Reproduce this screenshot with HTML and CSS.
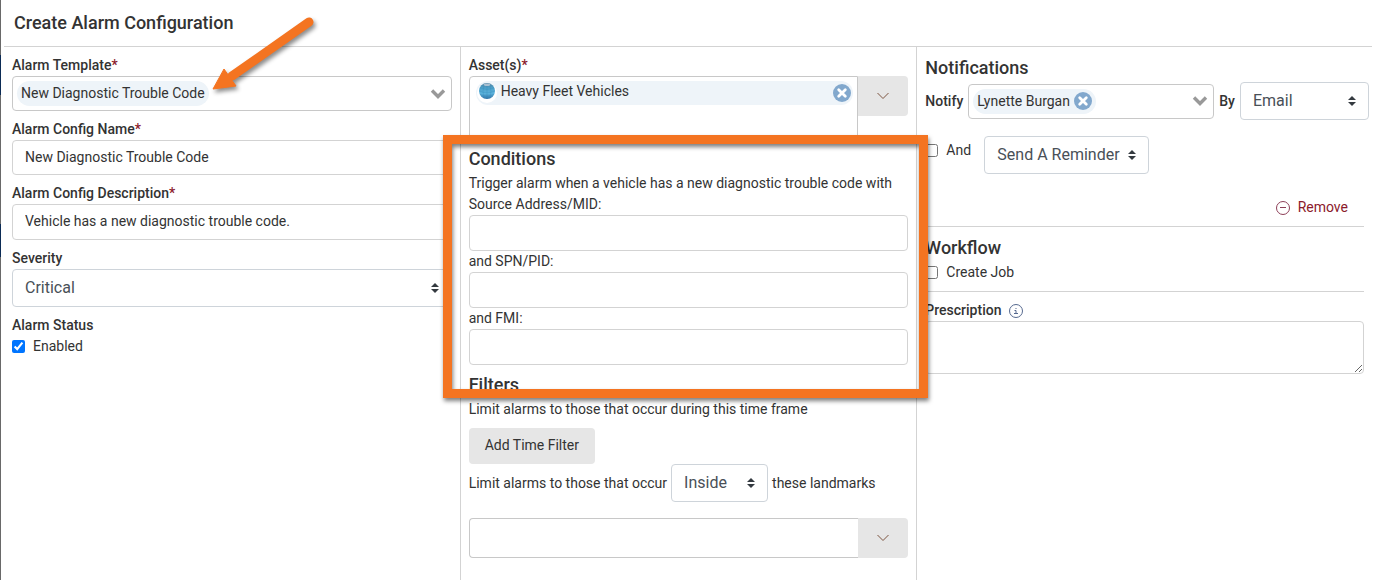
FILE: index.html
```html
<!DOCTYPE html>
<html lang="en">
<head>
<meta charset="utf-8">
<title>Create Alarm Configuration</title>
<meta name="viewport" content="width=device-width, initial-scale=1">
<link rel="stylesheet" href="styles.css">
</head>
<body>
<header class="page-header"><h1 class="page-title">Create Alarm Configuration</h1></header>
<form class="columns">
  <section class="column">
    <div class="field">
      <label class="label" for="template">Alarm Template<span class="required">*</span></label>
      <div class="picker callout-anchor">
        <span class="chip">New Diagnostic Trouble Code</span>
        <input class="picker-input" id="template" type="text">
        <button class="picker-toggle" type="button" aria-label="Show templates">
          <svg width="16" height="12" viewBox="0 0 16 12"><path d="M2 2.500 8 8.500 14 2.500" fill="none" stroke="#999" stroke-width="3.400"/></svg>
        </button>
        <svg class="arrow" width="112" height="84" viewBox="0 0 112 84" aria-hidden="true">
          <path d="M101 9 24 63" fill="none" stroke="#f47421" stroke-width="9" stroke-linecap="round"/>
          <path d="M5 76 16 56 28 73Z" fill="#f47421" stroke="#f47421" stroke-width="1"/>
        </svg>
      </div>
    </div>
    <div class="field">
      <label class="label" for="name">Alarm Config Name<span class="required">*</span></label>
      <input class="text-box name-box" id="name" type="text" value="New Diagnostic Trouble Code">
    </div>
    <div class="field">
      <label class="label" for="description">Alarm Config Description<span class="required">*</span></label>
      <input class="text-box" id="description" type="text" value="Vehicle has a new diagnostic trouble code.">
    </div>
    <div class="field">
      <label class="label" for="severity">Severity</label>
      <select class="select select-wide" id="severity"><option>Critical</option></select>
    </div>
    <div class="field">
      <span class="label">Alarm Status</span>
      <label class="check"><input class="checkbox" type="checkbox" checked>Enabled</label>
    </div>
  </section>

  <section class="column">
    <div class="field">
      <label class="label" for="assets">Asset(s)<span class="required">*</span></label>
      <div class="combo">
        <div class="asset-box">
          <div class="asset-chip">
            <span class="asset-icon">
              <svg width="16" height="16" viewBox="0 0 16 16" aria-hidden="true">
                <defs><linearGradient id="globe" x1="0" y1="0" x2="0" y2="1"><stop offset="0" stop-color="#4a7f9f"/><stop offset=".3" stop-color="#4c9fc8"/><stop offset=".65" stop-color="#5bb2dc"/><stop offset="1" stop-color="#3273a6"/></linearGradient></defs>
                <circle cx="8" cy="8" r="8" fill="url(#globe)"/>
                <ellipse cx="8" cy="1.800" rx="3.400" ry="1.300" fill="#a9bfd0"/>
                <path d="M1 5Q8 8 15 5M.3 8Q8 11.500 15.700 8M1 11.500Q8 15 15 11.500M5 2Q3 8 5 15M8 3v13M11 2Q13 8 11 15" fill="none" stroke="#2b83b4" stroke-width=".5" opacity=".5"/>
              </svg>
            </span>
            <span class="asset-name">Heavy Fleet Vehicles</span>
            <button class="clear" type="button" aria-label="Remove Heavy Fleet Vehicles">
              <svg width="18" height="18" viewBox="0 0 18 18"><circle cx="9" cy="9" r="9" fill="#82a8cd"/><path d="m5.700 5.700 6.600 6.600m0-6.600-6.600 6.600" stroke="#fff" stroke-width="2.800" stroke-linecap="round"/></svg>
            </button>
          </div>
          <input class="asset-input" id="assets" type="text">
        </div>
        <button class="combo-toggle" type="button" aria-label="Choose assets"><svg width="12" height="8" viewBox="0 0 12 8"><path d="m.5 1 5.500 5.500L11.500 1" fill="none" stroke="#7d5540"/></svg></button>
      </div>
    </div>

    <div class="conditions">
      <h2 class="heading">Conditions</h2>
      <p class="copy">Trigger alarm when a vehicle has a new diagnostic trouble code with</p>
      <label class="copy" for="source">Source Address/MID:</label>
      <input class="text-box" id="source" type="text">
      <label class="copy" for="spn">and SPN/PID:</label>
      <input class="text-box" id="spn" type="text">
      <label class="copy" for="fmi">and FMI:</label>
      <input class="text-box" id="fmi" type="text">
      <div class="highlight" aria-hidden="true"></div>
    </div>

    <div class="filters">
      <h2 class="heading">Filters</h2>
      <p class="copy">Limit alarms to those that occur during this time frame</p>
      <button class="button" type="button">Add Time Filter</button>
      <div class="landmark-row">
        <label for="where">Limit alarms to those that occur</label>
        <select class="select select-where" id="where"><option>Inside</option></select>
        <span>these landmarks</span>
      </div>
      <div class="combo">
        <input class="combo-input" type="text" aria-label="Landmarks">
        <button class="combo-toggle" type="button" aria-label="Choose landmarks"><svg width="12" height="8" viewBox="0 0 12 8"><path d="m.5 1 5.500 5.500L11.500 1" fill="none" stroke="#7d5540"/></svg></button>
      </div>
    </div>
  </section>

  <section class="column column-last">
    <div class="block">
      <h2 class="heading">Notifications</h2>
      <div class="notify-row">
        <label class="label" for="notify">Notify</label>
        <div class="picker picker-grow">
          <span class="chip">Lynette Burgan
            <button class="clear" type="button" aria-label="Remove Lynette Burgan">
              <svg width="18" height="18" viewBox="0 0 18 18"><circle cx="9" cy="9" r="9" fill="#82a8cd"/><path d="m5.700 5.700 6.600 6.600m0-6.600-6.600 6.600" stroke="#fff" stroke-width="2.800" stroke-linecap="round"/></svg>
            </button>
          </span>
          <input class="picker-input" id="notify" type="text">
          <button class="picker-toggle" type="button" aria-label="Show people">
            <svg width="16" height="12" viewBox="0 0 16 12"><path d="M2 2.500 8 8.500 14 2.500" fill="none" stroke="#999" stroke-width="3.400"/></svg>
          </button>
        </div>
        <label class="label" for="by">By</label>
        <select class="select select-by" id="by"><option>Email</option></select>
      </div>
      <div class="reminder-row">
        <label class="check reminder-check"><input class="checkbox" type="checkbox">And</label>
        <select class="select select-reminder" aria-label="Follow-up action"><option>Send A Reminder</option></select>
      </div>
      <div class="remove-row">
        <button class="remove" type="button">
          <svg width="14" height="14" viewBox="0 0 14 14"><circle cx="7" cy="7" r="6.500" fill="none" stroke="#8d3f58"/><path d="M4 6.500h6" stroke="#8d3f58"/></svg>
          Remove
        </button>
      </div>
    </div>
    <div class="block">
      <h2 class="heading">Workflow</h2>
      <label class="check"><input class="checkbox" type="checkbox">Create Job</label>
    </div>
    <div class="prescription">
      <div class="prescription-label">
        <label class="label" for="prescription">Prescription</label>
        <svg width="14" height="14" viewBox="0 0 14 14" aria-hidden="true"><circle cx="7" cy="7" r="6.500" fill="none" stroke="#56698f"/><path d="M5.500 6.500H7v3M5 9.500h4M6.500 4.500h1" fill="none" stroke="#56698f"/></svg>
      </div>
      <textarea class="textarea" id="prescription"></textarea>
    </div>
  </section>
</form>
</body>
</html>
```
FILE: styles.css
```css
*, *::before, *::after { box-sizing: border-box; }
body {
  margin: 0;
  min-height: 100vh;
  padding-left: 4px;
  display: flex;
  flex-direction: column;
  font: 14px/21px Roboto, sans-serif;
  color: #333;
  background: linear-gradient(#696969 0 55px, #0b2b55 55px 95px, #696969 95px 224px, #0b2b55 224px 257px, #696969 257px) left / 1px 100% no-repeat #fff;
}
h1, h2, p { margin: 0; }
button, input, select, textarea { font: inherit; color: inherit; }
button { padding: 0; border: 0; background: none; cursor: pointer; }
svg { display: block; }

.page-header { margin-right: 2px; padding: 11px 10px; border-bottom: 1px solid #d3d3d3; }
.page-title { font-size: 18px; line-height: 24px; font-weight: 500; }
.columns { flex: 1; display: grid; grid-template-columns: repeat(3, minmax(0, 1fr)); }
.column { padding: 8px; border-right: 1px solid #d3d3d3; }
.column-last { padding: 0 10px 8px 8px; border-right: 0; }
.field { margin-bottom: 8px; }
.label { display: block; font-weight: 500; }
.required { color: #8b1a2b; }
.copy { display: block; }
.heading { font-size: 18px; line-height: 24px; font-weight: 500; margin-bottom: 2px; }

.text-box {
  display: block;
  width: 100%;
  height: 36px;
  padding: 0 12px 2px;
  border: 1px solid #d3d3d3;
  border-radius: 4px;
  background: #fff;
}
.name-box { height: 35px; }
.select {
  appearance: none;
  height: 38px;
  padding: 0 28px 2px 12px;
  border: 1px solid #ced4da;
  border-radius: 4px;
  font-size: 16px;
  color: #495057;
  background: url("data:image/svg+xml,%3Csvg xmlns='http://www.w3.org/2000/svg' viewBox='0 0 4 5'%3E%3Cpath fill='%23343a40' d='M2 0 0 2h4zm0 5L0 3h4z'/%3E%3C/svg%3E") right 12px center / 8px 10px no-repeat #fff;
}
.select-wide { display: block; width: 100%; }
.select-where { width: 97px; }
.select-by { width: 129px; }
.select-reminder { width: 165px; }

.check { display: flex; align-items: center; gap: 8px; }
.checkbox { width: 13px; height: 13px; margin: 0; }

.picker {
  display: flex;
  align-items: center;
  height: 35px;
  padding: 0 5px 0 4px;
  border: 1px solid #c8c8c8;
  border-radius: 4px;
  background: #fff;
}
.picker-grow { flex: 1; min-width: 0; }
.picker-input { flex: 1; min-width: 0; border: 0; padding: 0; background: none; }
.picker-toggle { flex: none; }
.chip {
  flex: none;
  display: flex;
  align-items: center;
  gap: 4px;
  height: 25px;
  padding: 0 4px;
  border-radius: 13px;
  background: #eef4f9;
}
.clear { flex: none; border-radius: 50%; }

.combo { display: flex; align-items: flex-start; }
.asset-box {
  flex: 1;
  min-width: 0;
  height: 63px;
  padding: 4px 4px 0 6px;
  border: 1px solid #c8c8c8;
  border-radius: 4px 0 0 4px;
}
.asset-chip {
  display: flex;
  align-items: center;
  height: 24px;
  padding: 0 2px 0 3px;
  gap: 6px;
  border-radius: 12px;
  background: #eef4f9;
}
.asset-icon { padding: 0 2px 4px; margin: 0 -2px; border-radius: 50%; background: #fff; }
.asset-name { flex: 1; padding-bottom: 3px; }
.asset-input { display: block; width: 100%; border: 0; padding: 0; background: none; }
.combo-input {
  flex: 1;
  min-width: 0;
  height: 40px;
  padding: 0 12px;
  border: 1px solid #c8c8c8;
  border-right: 0;
  border-radius: 4px 0 0 4px;
}
.combo-toggle {
  display: flex;
  align-items: center;
  justify-content: center;
  width: 50px;
  height: 40px;
  border-radius: 0 4px 4px 0;
  background: #e6e6e6;
}

.conditions { position: relative; }
.highlight {
  position: absolute;
  z-index: 2;
  inset: -12px -20px -33px -26px;
  border: 9px solid #f47421;
  filter: drop-shadow(1px 3px 2px rgba(0, 0, 0, .5));
  pointer-events: none;
}
.callout-anchor { position: relative; }
.arrow {
  position: absolute;
  top: -64px;
  left: 195px;
  filter: drop-shadow(2px 3px 2px rgba(0, 0, 0, .45));
  pointer-events: none;
}

.filters { padding-top: 8px; }
.button {
  display: block;
  height: 36px;
  margin-top: 8px;
  padding: 0 16px 2px;
  border-radius: 4px;
  background: #e6e6e6;
}
.landmark-row { display: flex; align-items: center; gap: 4px; margin-bottom: 16px; }

.block { padding: 9px 0 8px; border-bottom: 1px solid #d3d3d3; }
.notify-row { display: flex; align-items: center; gap: 5px; margin-right: -5px; }
.reminder-row { display: flex; align-items: flex-start; margin-top: 16px; }
.reminder-check { width: 59px; padding-top: 4px; }
.remove-row { display: flex; justify-content: flex-end; margin-top: 23px; padding-right: 16px; }
.remove { display: flex; align-items: center; gap: 8px; color: #8b1a2b; }
.prescription { padding-top: 8px; }
.prescription-label { display: flex; align-items: center; gap: 8px; }
.textarea {
  display: block;
  width: 100%;
  height: 53px;
  padding: 4px 12px;
  border: 1px solid #d3d3d3;
  border-radius: 4px;
  resize: vertical;
}
```
